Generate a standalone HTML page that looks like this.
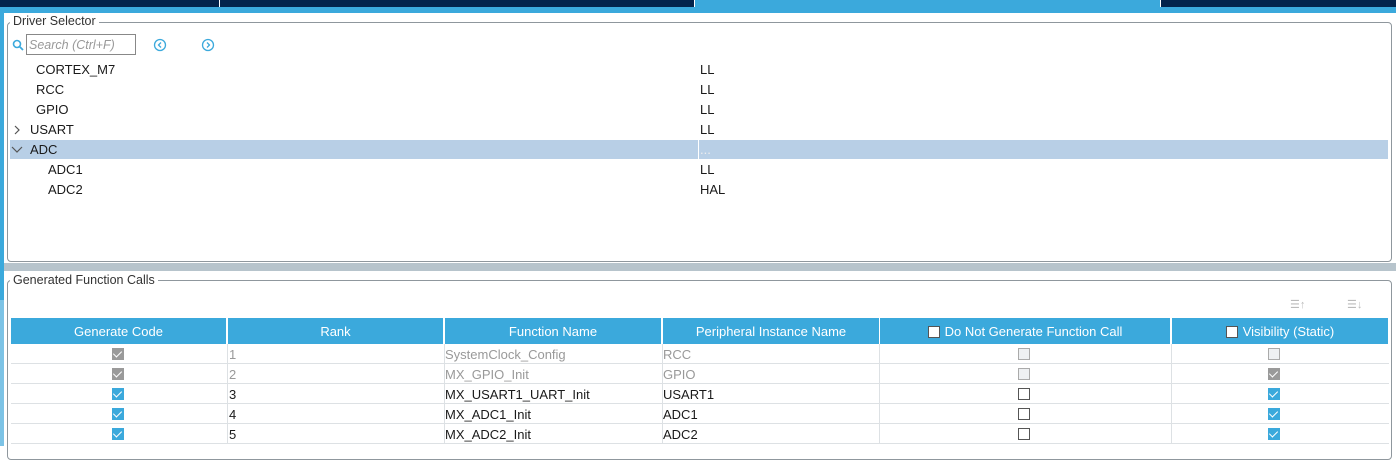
<!DOCTYPE html>
<html><head><style>
*{margin:0;padding:0;box-sizing:border-box}
body{width:1396px;height:446px;overflow:hidden;background:#fff;font-family:"Liberation Sans",sans-serif;font-size:13px;color:#1a1a1a;position:relative}
.a{position:absolute}
.fs{position:absolute;border:1px solid #8f979d;border-radius:4px}
.leg{position:absolute;background:#fff;padding:0 3px;color:#333;font-size:12.5px}
.t{position:absolute;font-size:13px;line-height:20px;margin-top:1px}
.hd{position:absolute;top:318px;height:26px;background:#3ba9dc;color:#fff;text-align:center;line-height:27px;font-size:13px}
.row{position:absolute;left:11px;width:1378px;height:20px;border-bottom:1px solid #dde1e4}
.vl{position:absolute;top:344px;height:100px;width:1px;background:#dde1e4}
.cb{position:absolute;width:12px;height:12px}
.ck{background:#3ba9dc}
.gk{background:#9a9a9a}
.ck::after,.gk::after{content:"";position:absolute;left:3px;top:1px;width:4px;height:7px;border:solid #fff;border-width:0 1.5px 1.5px 0;transform:rotate(45deg)}
.em{border:1px solid #555;background:#fff}
.di{border:1px solid #aaa;background:#eef0f2}
</style></head><body>
<div class="a" style="left:0;top:0;width:1396px;height:7px;background:#03234b"></div>
<div class="a" style="left:219px;top:0;width:1px;height:7px;background:#fff"></div>
<div class="a" style="left:694px;top:0;width:467px;height:7px;background:#3ba9dc;border-left:1px solid #fff;border-right:1px solid #fff"></div>
<div class="a" style="left:0;top:7px;width:1396px;height:6px;background:#3ba9dc"></div>
<div class="a" style="left:0;top:13px;width:4px;height:433px;background:#3ba9dc"></div>
<div class="a" style="left:0;top:300px;width:4px;height:146px;background:#7cc3e6"></div>

<div class="fs" style="left:7px;top:22px;width:1385px;height:240px"></div>
<div class="leg" style="left:10px;top:14px">Driver Selector</div>
<svg class="a" style="left:12px;top:39px" width="12" height="12"><circle cx="5" cy="5" r="3.5" fill="none" stroke="#3ba9dc" stroke-width="1.6"/><line x1="7.5" y1="7.5" x2="11" y2="11" stroke="#3ba9dc" stroke-width="1.8"/></svg>
<div class="a" style="left:26px;top:34px;width:110px;height:21px;border:1px solid #888;color:#999;font-style:italic;font-size:12.5px;line-height:20px;padding-left:2px">Search (Ctrl+F)</div>
<svg class="a" style="left:153px;top:38px" width="14" height="14"><circle cx="7" cy="7" r="5.5" fill="none" stroke="#3ba9dc" stroke-width="1.3"/><path d="M8 4.5L5.5 7L8 9.5" fill="none" stroke="#3ba9dc" stroke-width="1.3"/></svg>
<svg class="a" style="left:201px;top:38px" width="14" height="14"><circle cx="7" cy="7" r="5.5" fill="none" stroke="#3ba9dc" stroke-width="1.3"/><path d="M6 4.5L8.5 7L6 9.5" fill="none" stroke="#3ba9dc" stroke-width="1.3"/></svg>

<div class="a" style="left:10px;top:140px;width:1378px;height:19px;background:#b8cfe6"></div>
<div class="a" style="left:698px;top:140px;width:1px;height:19px;background:#fff"></div>
<div class="t" style="left:36px;top:59px">CORTEX_M7</div><div class="t" style="left:700px;top:59px">LL</div>
<div class="t" style="left:36px;top:79px">RCC</div><div class="t" style="left:700px;top:79px">LL</div>
<div class="t" style="left:36px;top:99px">GPIO</div><div class="t" style="left:700px;top:99px">LL</div>
<svg class="a" style="left:13px;top:125px" width="8" height="10"><path d="M2 1L6 5L2 9" fill="none" stroke="#555" stroke-width="1.2"/></svg>
<div class="t" style="left:30px;top:119px">USART</div><div class="t" style="left:700px;top:119px">LL</div>
<svg class="a" style="left:11px;top:146px" width="12" height="8"><path d="M1 1L6 6L11 1" fill="none" stroke="#555" stroke-width="1.2"/></svg>
<div class="t" style="left:30px;top:139px">ADC</div><div class="t" style="left:700px;top:139px;color:#eee">...</div>
<div class="t" style="left:48px;top:159px">ADC1</div><div class="t" style="left:700px;top:159px">LL</div>
<div class="t" style="left:48px;top:179px">ADC2</div><div class="t" style="left:700px;top:179px">HAL</div>

<div class="a" style="left:4px;top:263px;width:1392px;height:8px;background:#b7c4cc"></div>

<div class="fs" style="left:7px;top:280px;width:1385px;height:180px"></div>
<div class="leg" style="left:10px;top:273px">Generated Function Calls</div>
<div class="a" style="left:1290px;top:298px;color:#bbb;font-size:11px">☰↑</div>
<div class="a" style="left:1347px;top:298px;color:#bbb;font-size:11px">☰↓</div>

<div class="hd" style="left:11px;width:215px">Generate Code</div>
<div class="hd" style="left:228px;width:215px">Rank</div>
<div class="hd" style="left:445px;width:216px">Function Name</div>
<div class="hd" style="left:663px;width:216px">Peripheral Instance Name</div>
<div class="hd" style="left:880px;width:290px"><span style="display:inline-block;width:12px;height:12px;background:#fff;border:1px solid #555;vertical-align:-2px;margin-right:5px"></span>Do Not Generate Function Call</div>
<div class="hd" style="left:1172px;width:216px"><span style="display:inline-block;width:12px;height:12px;background:#fff;border:1px solid #555;vertical-align:-2px;margin-right:5px"></span>Visibility (Static)</div>

<div class="row" style="top:344px"></div><div class="row" style="top:364px"></div><div class="row" style="top:384px"></div><div class="row" style="top:404px"></div><div class="row" style="top:424px"></div>
<div class="vl" style="left:227px"></div><div class="vl" style="left:444px"></div><div class="vl" style="left:662px"></div><div class="vl" style="left:879px"></div><div class="vl" style="left:1171px"></div>

<div class="cb gk" style="left:112px;top:348px"></div><div class="t" style="left:229px;top:344px;color:#999">1</div><div class="t" style="left:445px;top:344px;color:#999">SystemClock_Config</div><div class="t" style="left:663px;top:344px;color:#999">RCC</div><div class="cb di" style="left:1018px;top:348px"></div><div class="cb di" style="left:1268px;top:348px"></div>
<div class="cb gk" style="left:112px;top:368px"></div><div class="t" style="left:229px;top:364px;color:#999">2</div><div class="t" style="left:445px;top:364px;color:#999">MX_GPIO_Init</div><div class="t" style="left:663px;top:364px;color:#999">GPIO</div><div class="cb di" style="left:1018px;top:368px"></div><div class="cb gk" style="left:1268px;top:368px"></div>
<div class="cb ck" style="left:112px;top:388px"></div><div class="t" style="left:229px;top:384px">3</div><div class="t" style="left:445px;top:384px">MX_USART1_UART_Init</div><div class="t" style="left:663px;top:384px">USART1</div><div class="cb em" style="left:1018px;top:388px"></div><div class="cb ck" style="left:1268px;top:388px"></div>
<div class="cb ck" style="left:112px;top:408px"></div><div class="t" style="left:229px;top:404px">4</div><div class="t" style="left:445px;top:404px">MX_ADC1_Init</div><div class="t" style="left:663px;top:404px">ADC1</div><div class="cb em" style="left:1018px;top:408px"></div><div class="cb ck" style="left:1268px;top:408px"></div>
<div class="cb ck" style="left:112px;top:428px"></div><div class="t" style="left:229px;top:424px">5</div><div class="t" style="left:445px;top:424px">MX_ADC2_Init</div><div class="t" style="left:663px;top:424px">ADC2</div><div class="cb em" style="left:1018px;top:428px"></div><div class="cb ck" style="left:1268px;top:428px"></div>
</body></html>
